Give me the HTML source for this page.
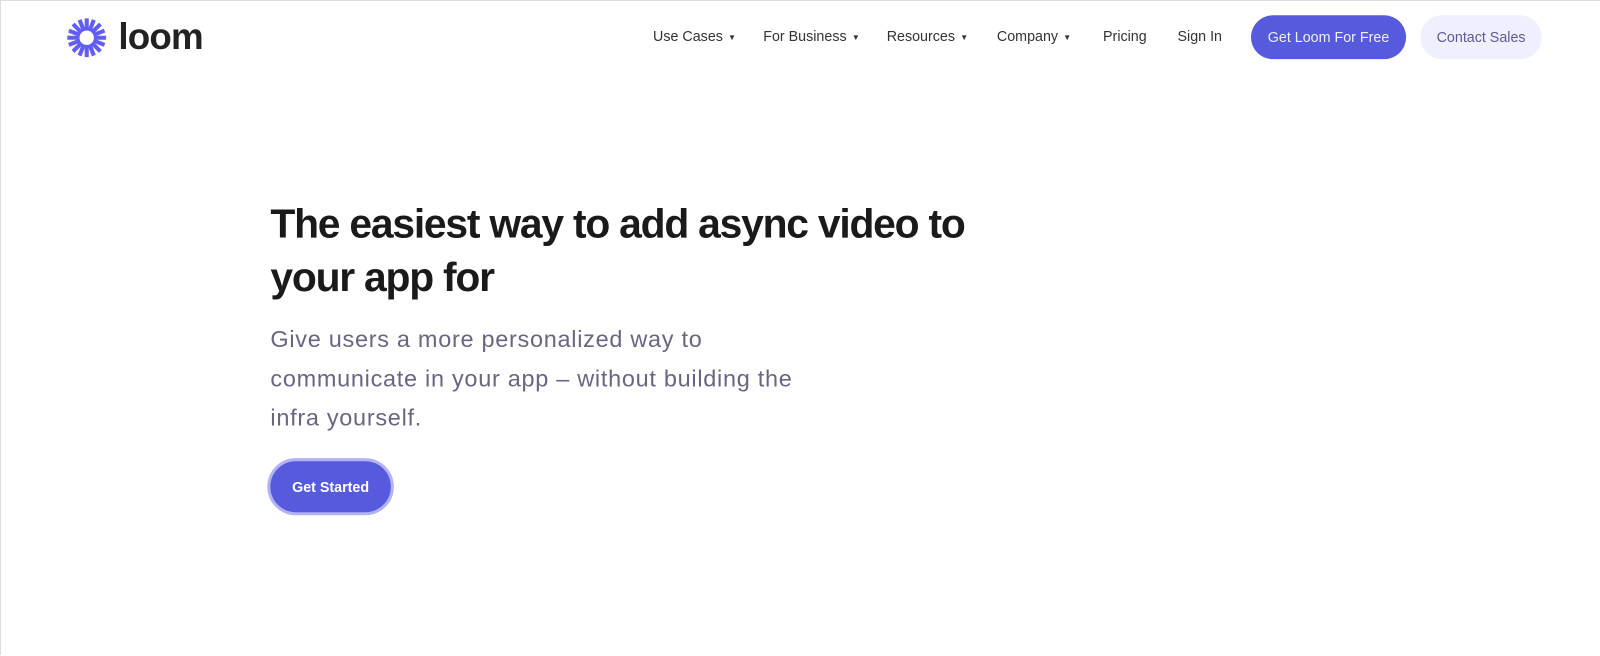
<!DOCTYPE html>
<html><head><style>
html,body{margin:0;padding:0;background:#fff;}
body{width:1600px;height:655px;position:relative;overflow:hidden;font-family:"Liberation Sans",sans-serif;border-top:1px solid #ddd;box-sizing:border-box;border-left:1px solid #ddd;}
#w{position:absolute;left:0;top:0;width:1568px;height:642px;transform:scale(1.0204);transform-origin:0 0;}
.nav a{position:absolute;top:26px;font-size:14px;color:#333;text-decoration:none;}
.car{font-size:8px;margin-left:5px;vertical-align:1px;}
h1{position:absolute;left:264px;top:193px;margin:0;font-size:40px;line-height:52px;font-weight:bold;color:#1a1a1a;letter-spacing:-1.2px;width:720px;}
p{position:absolute;left:264px;top:312px;margin:0;font-size:23px;line-height:38.5px;color:#6a6580;white-space:nowrap;letter-spacing:0.7px;}
</style></head><body><div id="w">
<svg style="position:absolute;left:64px;top:16px" width="40" height="40" viewBox="-20 -20 40 40">
<g stroke="#625df5" stroke-width="4" stroke-linecap="butt">
<line x1="0" y1="-19" x2="0" y2="-7"/><line x1="0" y1="19" x2="0" y2="7"/>
<line x1="-19" y1="0" x2="-7" y2="0"/><line x1="19" y1="0" x2="7" y2="0"/>
<line x1="-13.4" y1="-13.4" x2="-5" y2="-5"/><line x1="13.4" y1="13.4" x2="5" y2="5"/>
<line x1="13.4" y1="-13.4" x2="5" y2="-5"/><line x1="-13.4" y1="13.4" x2="-5" y2="5"/>
<line x1="-7" y1="-17.5" x2="-2.7" y2="-6.5"/><line x1="7" y1="17.5" x2="2.7" y2="6.5"/>
<line x1="7" y1="-17.5" x2="2.7" y2="-6.5"/><line x1="-7" y1="17.5" x2="-2.7" y2="6.5"/>
<line x1="-17.5" y1="-7" x2="-6.5" y2="-2.7"/><line x1="17.5" y1="7" x2="6.5" y2="2.7"/>
<line x1="17.5" y1="-7" x2="6.5" y2="-2.7"/><line x1="-17.5" y1="7" x2="-6.5" y2="2.7"/>
</g></svg>
<div style="position:absolute;left:115px;top:14px;font-size:36px;font-weight:bold;color:#222;letter-spacing:-0.8px;">loom</div>
<div class="nav">
<a style="left:639px">Use Cases<span class="car">▼</span></a>
<a style="left:747px">For Business<span class="car">▼</span></a>
<a style="left:868px">Resources<span class="car">▼</span></a>
<a style="left:976px">Company<span class="car">▼</span></a>
<a style="left:1080px">Pricing</a>
<a style="left:1153px">Sign In</a>
</div>
<div style="position:absolute;left:1225px;top:14px;width:152px;height:43px;border-radius:22px;background:#565adc;color:#eef;font-size:14px;line-height:43px;text-align:center;">Get Loom For Free</div>
<div style="position:absolute;left:1391px;top:14px;width:119px;height:43px;border-radius:22px;background:#efeffd;color:#5e5a9a;font-size:14px;line-height:43px;text-align:center;">Contact Sales</div>
<h1>The easiest way to add async video to your app for</h1>
<p>Give users a more personalized way to<br>communicate in your app – without building the<br>infra yourself.</p>
<div style="position:absolute;left:261px;top:448px;width:118px;height:50px;border-radius:28px;background:#565adc;border:3px solid #b3b2f2;color:#fff;font-size:14px;font-weight:bold;line-height:50px;text-align:center;">Get Started</div>
</div></body></html>
